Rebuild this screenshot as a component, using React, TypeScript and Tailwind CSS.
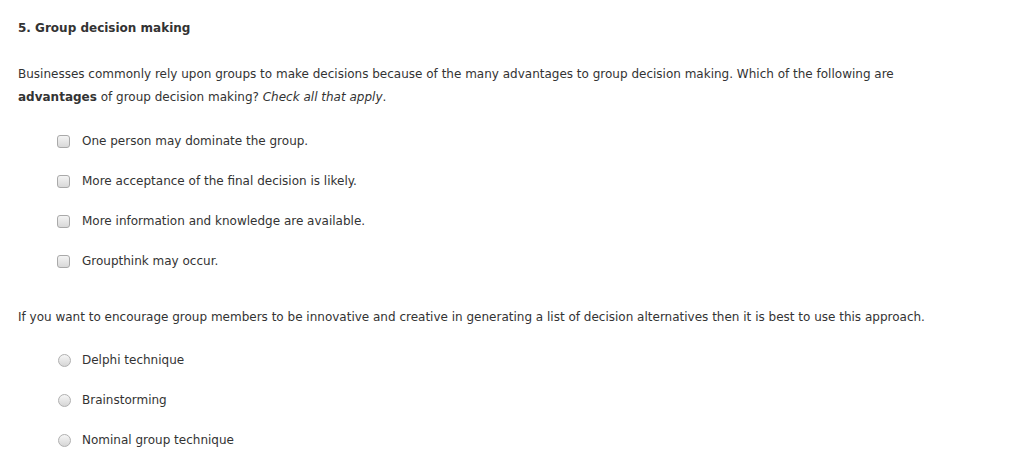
const font = { fontFamily: '"DejaVu Sans", Verdana, sans-serif' };

function Check() {
  return (
    <span className="inline-block h-[13px] w-[13px] shrink-0 rounded-[3px] border border-[#a9a9a9] bg-gradient-to-b from-[#f4f4f4] to-[#d8d8d8]" />
  );
}

function Radio() {
  return (
    <span className="inline-block h-[13px] w-[13px] shrink-0 rounded-full border border-[#b0b0b0] bg-gradient-to-b from-[#f6f6f6] to-[#d6d6d6]" />
  );
}

const checks = [
  "One person may dominate the group.",
  "More acceptance of the final decision is likely.",
  "More information and knowledge are available.",
  "Groupthink may occur.",
];

const radios = ["Delphi technique", "Brainstorming", "Nominal group technique"];

export default function App() {
  return (
    <div className="h-[475px] w-[1024px] overflow-hidden bg-white pl-[18px] pt-[20px] text-[12px] text-[#333]" style={font}>
      <h1 className="text-[12px] font-bold leading-[16px]">5. Group decision making</h1>

      <p className="mt-[27px] leading-[23px]">
        Businesses commonly rely upon groups to make decisions because of the many advantages to group decision making. Which of the following are
        <br />
        <b>advantages</b> of group decision making? <i>Check all that apply</i>.
      </p>

      <ul className="mt-[24px] flex flex-col gap-[24px] pl-[39px]">
        {checks.map((c) => (
          <li key={c} className="flex h-[16px] items-center gap-[12px]">
            <Check />
            <span>{c}</span>
          </li>
        ))}
      </ul>

      <p className="mt-[40px] leading-[16px]">
        If you want to encourage group members to be innovative and creative in generating a list of decision alternatives then it is best to use this approach.
      </p>

      <ul className="mt-[27px] flex flex-col gap-[24px] pl-[40px]">
        {radios.map((r) => (
          <li key={r} className="flex h-[16px] items-center gap-[11px]">
            <Radio />
            <span>{r}</span>
          </li>
        ))}
      </ul>
    </div>
  );
}
